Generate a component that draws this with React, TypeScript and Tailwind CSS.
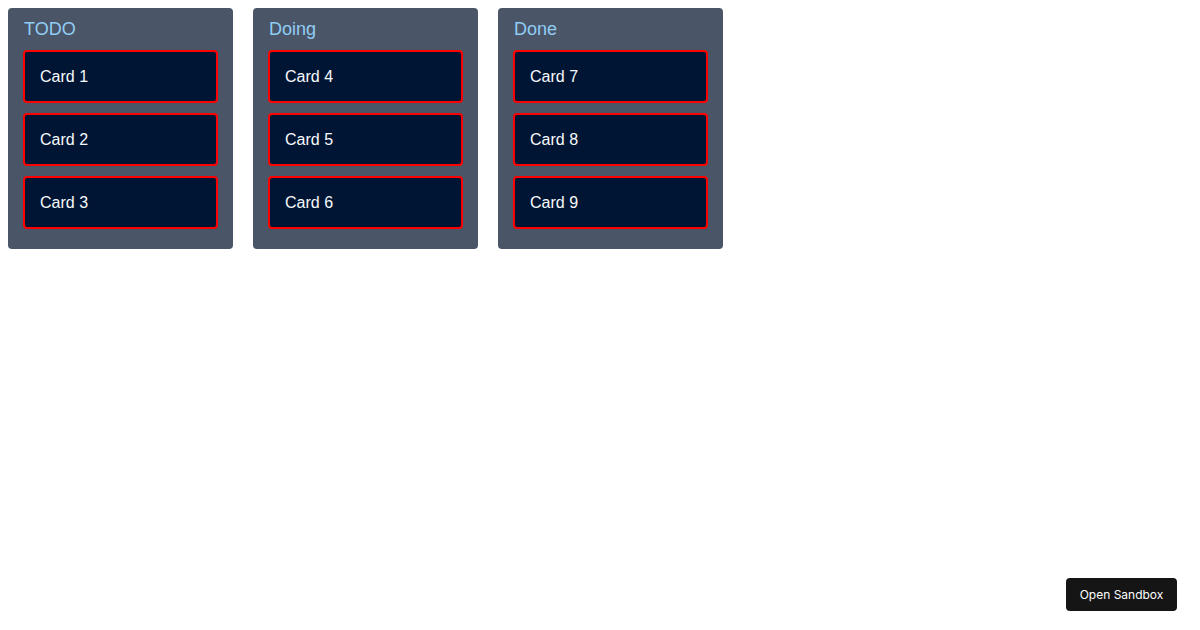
const columns = [
  { title: 'TODO', cards: ['Card 1', 'Card 2', 'Card 3'] },
  { title: 'Doing', cards: ['Card 4', 'Card 5', 'Card 6'] },
  { title: 'Done', cards: ['Card 7', 'Card 8', 'Card 9'] },
];

export default function App() {
  return (
    <div className="relative h-[630px] w-[1200px] bg-white font-['Liberation_Sans',Arial,sans-serif]">
      <div className="flex items-start gap-5 p-2">
        {columns.map((col) => (
          <div key={col.title} className="w-[225px] rounded-[4px] bg-[#4a5568] px-[15px] pt-[11px] pb-5">
            <h2 className="mb-[11px] pl-px text-[18px] leading-[20px] text-[#90cdf4]">{col.title}</h2>
            <div className="flex flex-col gap-[10px]">
              {col.cards.map((c) => (
                <div
                  key={c}
                  className="flex h-[53px] items-center rounded-[4px] border-2 border-[#ff0000] bg-[#001533] px-[15px] text-[16px] text-[#f7fafc]"
                >
                  {c}
                </div>
              ))}
            </div>
          </div>
        ))}
      </div>
      <button className="absolute bottom-[19px] right-[23px] flex h-[33px] w-[111px] items-center justify-center rounded-[4px] bg-[#151515] text-[12px] text-white font-['Inter',sans-serif]">
        Open Sandbox
      </button>
    </div>
  );
}
